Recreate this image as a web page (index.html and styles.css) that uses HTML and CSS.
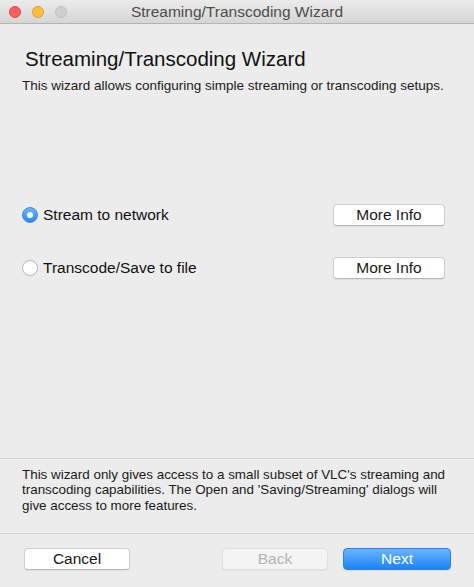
FILE: index.html
```html
<!DOCTYPE html>
<html lang="en">
<head>
    <meta charset="UTF-8">
    <title>Streaming/Transcoding Wizard</title>
    <link rel="stylesheet" href="styles.css">
</head>
<body>
    <div class="window">
        <div class="titlebar">
            <div class="lights">
                <span class="light close"></span>
                <span class="light minimize"></span>
                <span class="light zoom"></span>
            </div>
            <div class="title">Streaming/Transcoding Wizard</div>
        </div>

        <div class="content">
            <h1 class="heading">Streaming/Transcoding Wizard</h1>
            <p class="subtitle">This wizard allows configuring simple streaming or transcoding setups.</p>

            <div class="options">
                <div class="option">
                    <label class="radio-label">
                        <span class="radio checked"></span>
                        Stream to network
                    </label>
                    <button class="btn info">More Info</button>
                </div>
                <div class="option">
                    <label class="radio-label">
                        <span class="radio"></span>
                        Transcode/Save to file
                    </label>
                    <button class="btn info">More Info</button>
                </div>
            </div>
        </div>

        <div class="note">
            This wizard only gives access to a small subset of VLC's streaming and transcoding capabilities. The Open and 'Saving/Streaming' dialogs will give access to more features.
        </div>

        <div class="footer">
            <button class="btn cancel">Cancel</button>
            <div class="footer-right">
                <button class="btn back" disabled>Back</button>
                <button class="btn next">Next</button>
            </div>
        </div>
    </div>
</body>
</html>
```

FILE: styles.css
```css
body {
    margin: 0;
    padding: 0;
    font-family: "Liberation Sans", Arial, sans-serif;
    color: #1a1a1a;
}

.window {
    width: 474px;
    height: 587px;
    background: #ececec;
    display: flex;
    flex-direction: column;
    overflow: hidden;
}

/* title bar */
.titlebar {
    height: 23px;
    flex-shrink: 0;
    position: relative;
    display: flex;
    align-items: center;
    justify-content: center;
    background: linear-gradient(#ebebeb, #d5d5d5);
    border-bottom: 1px solid #b4b4b4;
}

.lights {
    position: absolute;
    left: 9px;
    top: 6px;
    display: flex;
    gap: 11px;
}

.light {
    width: 12px;
    height: 12px;
    border-radius: 50%;
    box-sizing: border-box;
}

.close {
    background: #fc605c;
    border: 1px solid #e0443e;
}

.minimize {
    background: #fdbc40;
    border: 1px solid #dea236;
}

.zoom {
    background: #d0d0d0;
    border: 1px solid #bdbdbd;
}

.title {
    font-size: 15.5px;
    color: #4d4d4d;
}

/* main part */
.content {
    flex: 1;
    padding: 0 22px;
}

.heading {
    margin: 23px 0 0 3px;
    font-size: 20.5px;
    line-height: 24px;
    font-weight: normal;
    color: #111;
}

.subtitle {
    margin: 7px 0 0;
    font-size: 13.5px;
    line-height: 16px;
}

.options {
    margin-top: 110px;
    display: flex;
    flex-direction: column;
    gap: 31px;
}

.option {
    display: flex;
    align-items: center;
    justify-content: space-between;
    height: 22px;
}

.radio-label {
    display: flex;
    align-items: center;
    gap: 5px;
    font-size: 15.5px;
    color: #111;
}

.radio {
    width: 16px;
    height: 16px;
    box-sizing: border-box;
    border-radius: 50%;
    background: #fff;
    border: 1px solid #b8b8b8;
    position: relative;
}

.radio.checked {
    background: linear-gradient(#68b2fb, #2c8af3);
    border: 1px solid #3a8ae8;
}

.radio.checked::after {
    content: "";
    position: absolute;
    left: 4px;
    top: 4px;
    width: 6px;
    height: 6px;
    border-radius: 50%;
    background: #fff;
}

/* buttons */
.btn {
    height: 22px;
    box-sizing: border-box;
    padding: 0;
    font-family: inherit;
    font-size: 15.5px;
    color: #1a1a1a;
    background: #fff;
    border: 1px solid #cfcfcf;
    border-bottom-color: #b6b6b6;
    border-radius: 4px;
    box-shadow: 0 1px 1px rgba(0, 0, 0, 0.06);
}

.info {
    width: 112px;
    margin-right: 7px;
}

.note {
    border-top: 1px solid #d3d3d3;
    border-bottom: 1px solid #d3d3d3;
    padding: 8px 22px 20px;
    font-size: 13.4px;
    line-height: 15.5px;
}

.footer {
    display: flex;
    justify-content: space-between;
    padding: 14px 23px 17px 24px;
}

.footer-right {
    display: flex;
    gap: 15px;
}

.cancel,
.back {
    width: 106px;
}

.back {
    background: #f4f4f4;
    color: #b3b3b3;
    border-color: #e0e0e0;
}

.next {
    width: 108px;
    color: #fff;
    background: linear-gradient(#6bb5fb, #1b83fb);
    border: 1px solid #2a7fe6;
}
```
